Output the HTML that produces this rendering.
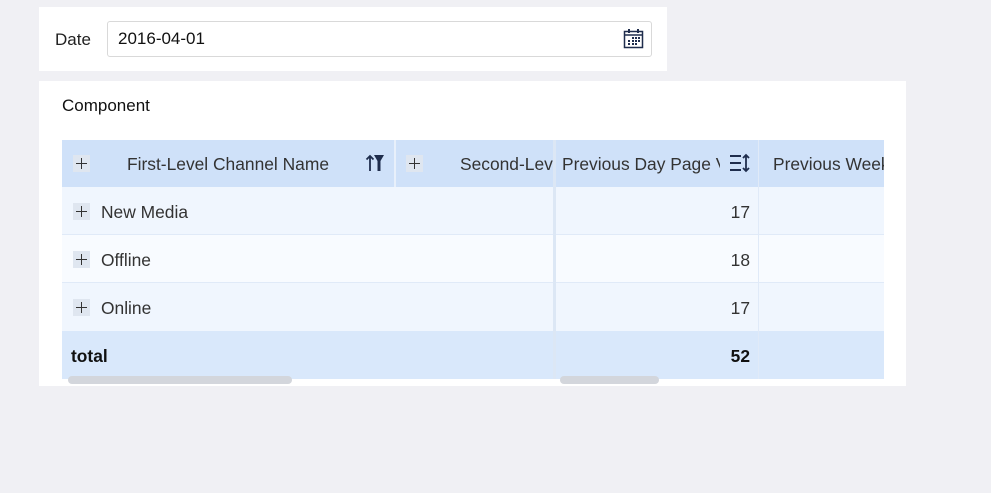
<!DOCTYPE html>
<html><head><style>
body{margin:0;width:991px;height:493px;background:#f0f0f4;font-family:"Liberation Sans",sans-serif;position:relative;overflow:hidden}
.a{position:absolute}
.card{background:#fff}
.t{font-size:17.4px;color:#333;white-space:nowrap}
.plus{position:absolute;width:17px;height:17px;background:#dfe6f0}
.plus:before{content:"";position:absolute;left:3px;top:8px;width:11px;height:1.3px;background:#333}
.plus:after{content:"";position:absolute;left:8px;top:3px;width:1.3px;height:11px;background:#333}
</style></head><body>
<div class="a card" style="left:39px;top:7px;width:628px;height:64px"></div>
<div class="a t" style="left:55px;top:30px;font-size:17px;color:#222">Date</div>
<div class="a" style="left:107px;top:21px;width:543px;height:34px;border:1px solid #d9d9d9;border-radius:3px;background:#fff"></div>
<div class="a t" style="left:118px;top:29px;font-size:17px;color:#111">2016-04-01</div>
<svg class="a" style="left:623px;top:28px" width="21" height="21" viewBox="0 0 21 21">
<rect x="1.5" y="3.5" width="18" height="16" fill="none" stroke="#1f2d4d" stroke-width="1.5"/>
<line x1="1.5" y1="7" x2="19.5" y2="7" stroke="#1f2d4d" stroke-width="1.5"/>
<line x1="6" y1="1" x2="6" y2="5" stroke="#1f2d4d" stroke-width="2"/><line x1="15" y1="1" x2="15" y2="5" stroke="#1f2d4d" stroke-width="2"/>
<g fill="#1f2d4d"><rect x="9" y="9" width="2" height="2"/><rect x="12" y="9" width="2" height="2"/><rect x="15" y="9" width="2" height="2"/><rect x="5" y="12" width="2" height="2"/><rect x="9" y="12" width="2" height="2"/><rect x="12" y="12" width="2" height="2"/><rect x="15" y="12" width="2" height="2"/><rect x="5" y="15" width="2" height="2"/><rect x="9" y="15" width="2" height="2"/><rect x="12" y="15" width="2" height="2"/></g></svg>

<div class="a card" style="left:39px;top:81px;width:867px;height:305px"></div>
<div class="a t" style="left:62px;top:96px;color:#111;font-size:17px">Component</div>

<div class="a" style="left:62px;top:140px;width:822px;height:47px;background:#cfe1f9"></div>
<div class="a" style="left:62px;top:187px;width:822px;height:48px;background:#f0f6fe;border-bottom:1px solid #e0eaf8;box-sizing:border-box"></div>
<div class="a" style="left:62px;top:235px;width:822px;height:48px;background:#f8fbff;border-bottom:1px solid #e0eaf8;box-sizing:border-box"></div>
<div class="a" style="left:62px;top:283px;width:822px;height:48px;background:#f0f6fe"></div>
<div class="a" style="left:62px;top:331px;width:822px;height:48px;background:#d9e8fb"></div>
<div class="a" style="left:394px;top:140px;width:2px;height:47px;background:#e8f0fb"></div>
<div class="a" style="left:758px;top:140px;width:1px;height:239px;background:#e0eaf8"></div>
<div class="a" style="left:553px;top:140px;width:3px;height:239px;background:#dce7f5"></div>

<div class="plus" style="left:73px;top:155px"></div>
<div class="a t" style="left:127px;top:154px">First-Level Channel Name</div>
<svg class="a" style="left:365px;top:154px" width="20" height="18" viewBox="0 0 20 18"><path d="M5 17V2M1.5 5.5L5 2L8.5 5.5" fill="none" stroke="#1f2d4d" stroke-width="1.8"/><path d="M9 1h10l-3.5 6v10h-3V7z" fill="#1f2d4d"/></svg>
<div class="plus" style="left:406px;top:155px"></div>
<div class="a" style="left:460px;top:140px;width:93px;height:47px;overflow:hidden"><div class="t" style="margin-top:14px">Second-Level</div></div>
<div class="a" style="left:562px;top:140px;width:158px;height:47px;overflow:hidden"><div class="t" style="margin-top:14px">Previous Day Page Views</div></div>
<svg class="a" style="left:729px;top:153px" width="22" height="20" viewBox="0 0 22 20"><path d="M1 3h11M1 10h11M1 17h11" stroke="#1f2d4d" stroke-width="2"/><path d="M17 2v16M14 5l3-3 3 3M14 15l3 3 3-3" fill="none" stroke="#1f2d4d" stroke-width="1.8"/></svg>
<div class="a" style="left:773px;top:140px;width:111px;height:47px;overflow:hidden"><div class="t" style="margin-top:14px">Previous Week</div></div>

<div class="plus" style="left:73px;top:203px"></div><div class="a t" style="left:101px;top:202px">New Media</div>
<div class="plus" style="left:73px;top:251px"></div><div class="a t" style="left:101px;top:250px">Offline</div>
<div class="plus" style="left:73px;top:299px"></div><div class="a t" style="left:101px;top:298px">Online</div>
<div class="a t" style="left:71px;top:346px;font-weight:bold;color:#111">total</div>
<div class="a t" style="left:700px;top:202px;width:50px;text-align:right">17</div>
<div class="a t" style="left:700px;top:250px;width:50px;text-align:right">18</div>
<div class="a t" style="left:700px;top:298px;width:50px;text-align:right">17</div>
<div class="a t" style="left:700px;top:346px;width:50px;text-align:right;font-weight:bold;color:#111">52</div>

<div class="a" style="left:68px;top:376px;width:224px;height:8px;border-radius:4px;background:#d3d6dc"></div>
<div class="a" style="left:560px;top:376px;width:99px;height:8px;border-radius:4px;background:#d3d6dc"></div>
</body></html>
